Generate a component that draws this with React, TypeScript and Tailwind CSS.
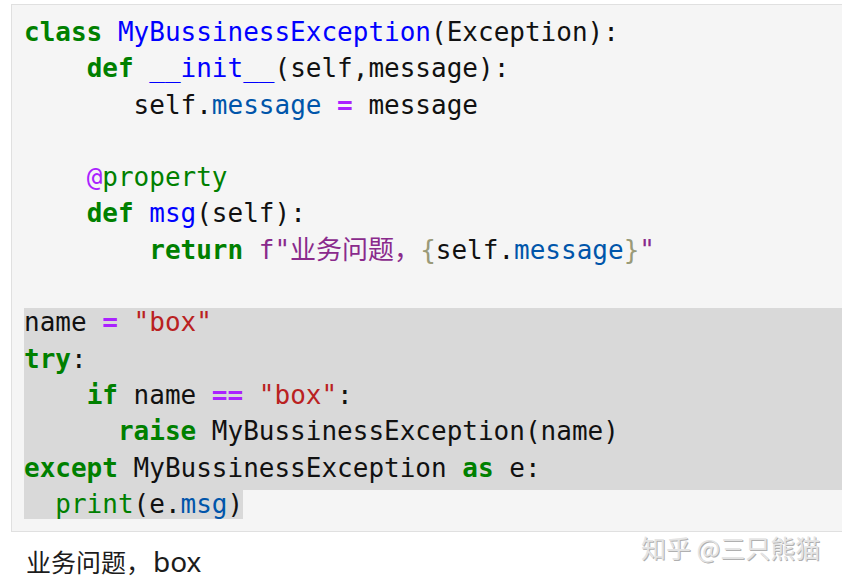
import React from "react";

const K = ({ children }: { children: React.ReactNode }) => (
  <span className="font-bold text-[#008000]">{children}</span>
);
const D = ({ children }: { children: React.ReactNode }) => (
  <span className="text-[#0000ff]">{children}</span>
);
const P = ({ children }: { children: React.ReactNode }) => (
  <span className="text-[#0055aa]">{children}</span>
);
const O = ({ children }: { children: React.ReactNode }) => (
  <span className="font-bold text-[#aa22ff]">{children}</span>
);
const S = ({ children }: { children: React.ReactNode }) => (
  <span className="text-[#ba2121]">{children}</span>
);
const F = ({ children }: { children: React.ReactNode }) => (
  <span className="text-[#8a2a8c]">{children}</span>
);
const B = ({ children }: { children: React.ReactNode }) => (
  <span className="text-[#9a9a78]">{children}</span>
);

const Line = ({ sel, children }: { sel?: boolean; children?: React.ReactNode }) => (
  <div
    className={`h-[36.3px] whitespace-pre ${sel ? "bg-[#d9d9d9] leading-[29px]" : "leading-[36.3px]"}`}
  >
    {children}
  </div>
);

const App = () => {
  return (
    <div className="relative w-[842px] h-[586px] bg-white overflow-hidden">
      {/* code cell */}
      <div className="ml-[11px] mt-[4px] w-[840px] border border-r-0 border-[#e0e0e0] bg-[#f5f5f5] pl-[12px] pt-[9px] pb-[12px] text-[26px] text-[#111] [font-family:'DejaVu_Sans_Mono','Noto_Sans_CJK_SC',monospace]">
        <Line>
          <K>class</K> <D>MyBussinessException</D>(Exception):
        </Line>
        <Line>
          {"    "}
          <K>def</K> <D>__init__</D>(self,message):
        </Line>
        <Line>
          {"       "}self.<P>message</P> <O>=</O> message
        </Line>
        <Line> </Line>
        <Line>
          {"    "}
          <span className="text-[#aa22ff]">@</span>
          <span className="text-[#008000]">property</span>
        </Line>
        <Line>
          {"    "}
          <K>def</K> <D>msg</D>(self):
        </Line>
        <Line>
          {"        "}
          <K>return</K> <F>f"业务问题，</F>
          <B>{"{"}</B>self.<P>message</P>
          <B>{"}"}</B>
          <F>"</F>
        </Line>
        <Line> </Line>
        <div className="mt-[4px]">
          <Line sel>
            name <O>=</O> <S>"box"</S>
          </Line>
          <Line sel>
            <K>try</K>:
          </Line>
          <Line sel>
            {"    "}
            <K>if</K> name <O>==</O> <S>"box"</S>:
          </Line>
          <Line sel>
            {"      "}
            <K>raise</K> MyBussinessException(name)
          </Line>
          <Line sel>
            <K>except</K> MyBussinessException <K>as</K> e:
          </Line>
          <div className="h-[29px] leading-[29px] whitespace-pre">
            <span className="inline-block bg-[#d9d9d9]">
              {"  "}
              <span className="text-[#008000]">print</span>(e.<P>msg</P>)
            </span>
          </div>
        </div>
      </div>

      {/* output */}
      <div className="pl-[26px] pt-[12px] text-[25px] leading-[34px] text-[#1c1c1c] [font-family:'Noto_Sans','Noto_Sans_CJK_SC',sans-serif]">
        业务问题，<span className="ml-[2px] text-[28px]">box</span>
      </div>

      {/* watermark */}
      <div className="absolute left-[641px] top-[530px] text-[25px] leading-[34px] text-[#e4e4e4] [text-shadow:1px_1px_0_#b0b0b0] [font-family:'Noto_Sans_CJK_SC',sans-serif]">
        知乎 @三只熊猫
      </div>
    </div>
  );
};

export default App;
